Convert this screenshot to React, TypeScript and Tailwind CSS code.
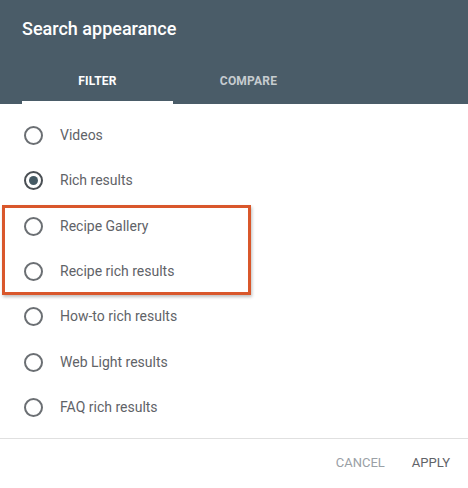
import React, { useState } from 'react';

const options = [
  'Videos',
  'Rich results',
  'Recipe Gallery',
  'Recipe rich results',
  'How-to rich results',
  'Web Light results',
  'FAQ rich results',
];

const Radio: React.FC<{ checked: boolean }> = ({ checked }) => (
  <span
    className={`flex h-[19px] w-[19px] items-center justify-center rounded-full border-2 ${
      checked ? 'border-[#4a4f54]' : 'border-[#6b6f73]'
    }`}
  >
    {checked && <span className="h-[9px] w-[9px] rounded-full bg-[#455a64]" />}
  </span>
);

const App: React.FC = () => {
  const [tab, setTab] = useState<'filter' | 'compare'>('filter');
  const [selected, setSelected] = useState('Rich results');

  return (
    <div className="h-[488px] w-[468px] overflow-hidden bg-white font-['Roboto',sans-serif]">
      {/* Header */}
      <div className="h-[104px] bg-[#4a5c68]">
        <h1 className="px-[22px] pt-[15px] text-[18px] font-medium leading-[28px] text-white">
          Search appearance
        </h1>
        <div className="mt-[22px] flex px-[22px]">
          {(['filter', 'compare'] as const).map((t) => (
            <button
              key={t}
              onClick={() => setTab(t)}
              className={`flex h-[39px] w-[151px] flex-col justify-between text-[12px] font-bold uppercase tracking-[0.2px] ${
                tab === t ? 'text-white' : 'text-white/70'
              }`}
            >
              <span className="pt-[8px] leading-[16px]">{t}</span>
              <span className={`h-[3px] w-full ${tab === t ? 'bg-white' : 'bg-transparent'}`} />
            </button>
          ))}
        </div>
      </div>

      {/* Options */}
      <div className="relative pt-[9px] pb-[8px]">
        {options.map((o) => (
          <label
            key={o}
            onClick={() => setSelected(o)}
            className="flex h-[45.3px] cursor-pointer items-center pl-[24px] text-[14px] text-[#5f6368]"
          >
            <Radio checked={selected === o} />
            <span className="ml-[17px]">{o}</span>
          </label>
        ))}
        {/* Annotation box */}
        <div className="pointer-events-none absolute left-[2px] top-[101px] h-[90px] w-[249px] border-[3px] border-[#d9572b] shadow-[1px_2px_3px_rgba(0,0,0,0.25)]" />
      </div>

      {/* Footer */}
      <div className="flex items-center justify-end gap-[27px] border-t border-[#e0e0e0] pr-[18px] pt-[14px] text-[13px]">
        <button className="uppercase text-[#9aa0a6]">Cancel</button>
        <button className="uppercase text-[#5f6368]">Apply</button>
      </div>
    </div>
  );
};

export default App;
